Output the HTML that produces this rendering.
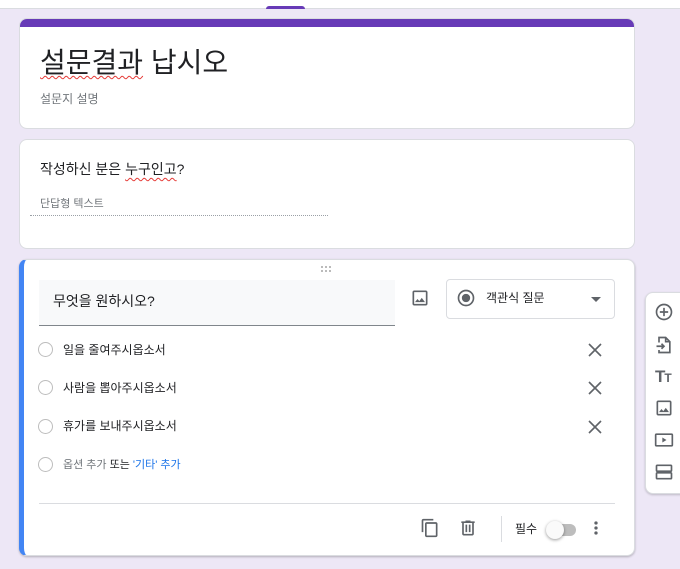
<!DOCTYPE html>
<html><head><meta charset="utf-8"><style>
*{margin:0;padding:0;box-sizing:border-box}
body{width:680px;height:569px;background:#ede7f6;font-family:"Liberation Sans","Noto Sans CJK KR",sans-serif;position:relative;overflow:hidden;color:#202124}
.abs{position:absolute}
.card{position:absolute;background:#fff;border:1px solid #dadce0;border-radius:8px;left:19px;width:616px}
.sq{text-decoration:underline wavy #e53935;text-decoration-thickness:1px;text-underline-offset:3px}
svg{position:absolute}
</style></head><body>
<div class="abs" style="left:0;top:0;width:680px;height:9px;background:#fff;border-bottom:1px solid #dadce0"></div>
<div class="abs" style="left:266px;top:6px;width:39px;height:3px;background:#673ab7;border-radius:3px 3px 0 0"></div>

<div class="card" style="top:18px;height:111px;overflow:hidden">
  <div class="abs" style="left:0;top:0;width:616px;height:8px;background:#673ab7"></div>
  <div class="abs" style="left:20px;top:22px;font-size:28px;color:#202124"><span class="sq">설문결과</span> 납시오</div>
  <div class="abs" style="left:20px;top:71px;font-size:12px;color:#70757a">설문지 설명</div>
</div>

<div class="card" style="top:139px;height:110px">
  <div class="abs" style="left:20px;top:19px;font-size:14px">작성하신 분은 <span class="sq">누구인고</span>?</div>
  <div class="abs" style="left:20px;top:55px;font-size:11px;color:#70757a">단답형 텍스트</div>
  <div class="abs" style="left:10px;top:75px;width:298px;border-bottom:1px dotted #9aa0a6"></div>
</div>

<div class="card" style="top:259px;height:297px;border-left:5px solid #4285f4;box-shadow:0 1px 2px rgba(0,0,0,.25)">
  <svg style="left:297px;top:6px" width="12" height="8" viewBox="0 0 12 8"><g fill="#bbb"><rect x="0" y="0" width="2" height="2"/><rect x="4" y="0" width="2" height="2"/><rect x="8" y="0" width="2" height="2"/><rect x="0" y="4" width="2" height="2"/><rect x="4" y="4" width="2" height="2"/><rect x="8" y="4" width="2" height="2"/></g></svg>
  <div class="abs" style="left:15px;top:20px;width:356px;height:46px;background:#f8f9fa;border-bottom:1px solid #80868b"></div>
  <div class="abs" style="left:29px;top:31px;font-size:14px">무엇을 원하시오?</div>
  <svg style="left:386px;top:28px" width="20" height="20" viewBox="0 0 24 24"><path fill="#5f6368" d="M19 5v14H5V5h14m0-2H5c-1.1 0-2 .9-2 2v14c0 1.1.9 2 2 2h14c1.1 0 2-.9 2-2V5c0-1.1-.9-2-2-2zm-4.86 8.86l-3 3.87L9 13.14 6 17h12l-3.86-5.14z"/></svg>
  <div class="abs" style="left:422px;top:19px;width:169px;height:40px;border:1px solid #dadce0;border-radius:4px"></div>
  <svg style="left:432px;top:28px" width="20" height="20" viewBox="0 0 24 24"><circle cx="12" cy="12" r="9" fill="none" stroke="#5f6368" stroke-width="2"/><circle cx="12" cy="12" r="5" fill="#5f6368"/></svg>
  <div class="abs" style="left:462px;top:29px;font-size:12px">객관식 질문</div>
  <div class="abs" style="left:567px;top:37px;width:0;height:0;border-left:5px solid transparent;border-right:5px solid transparent;border-top:5px solid #5f6368"></div>

  <div class="abs" style="left:14px;top:82px;width:15px;height:15px;border:1.5px solid #bdbdbd;border-radius:50%"></div>
  <div class="abs" style="left:39px;top:81px;font-size:12px">일을 줄여주시옵소서</div>
  <div class="abs" style="left:14px;top:120px;width:15px;height:15px;border:1.5px solid #bdbdbd;border-radius:50%"></div>
  <div class="abs" style="left:39px;top:119px;font-size:12px">사람을 뽑아주시옵소서</div>
  <div class="abs" style="left:14px;top:159px;width:15px;height:15px;border:1.5px solid #bdbdbd;border-radius:50%"></div>
  <div class="abs" style="left:39px;top:157px;font-size:12px">휴가를 보내주시옵소서</div>
  <div class="abs" style="left:14px;top:197px;width:15px;height:15px;border:1.5px solid #bdbdbd;border-radius:50%"></div>
  <div class="abs" style="left:39px;top:196px;font-size:11px;color:#70757a">옵션 추가 <span style="color:#202124">또는</span> <span style="color:#1a73e8">'기타' 추가</span></div>
  <svg style="left:563px;top:82px" width="16" height="16" viewBox="0 0 16 16"><path d="M2 2L14 14M14 2L2 14" stroke="#5f6368" stroke-width="1.6"/></svg>
  <svg style="left:563px;top:120px" width="16" height="16" viewBox="0 0 16 16"><path d="M2 2L14 14M14 2L2 14" stroke="#5f6368" stroke-width="1.6"/></svg>
  <svg style="left:563px;top:159px" width="16" height="16" viewBox="0 0 16 16"><path d="M2 2L14 14M14 2L2 14" stroke="#5f6368" stroke-width="1.6"/></svg>

  <div class="abs" style="left:15px;top:243px;width:576px;border-top:1px solid #dadce0"></div>
  <svg style="left:396px;top:258px" width="20" height="20" viewBox="0 0 24 24"><path fill="#5f6368" d="M16 1H4c-1.1 0-2 .9-2 2v14h2V3h12V1zm3 4H8c-1.1 0-2 .9-2 2v14c0 1.1.9 2 2 2h11c1.1 0 2-.9 2-2V7c0-1.1-.9-2-2-2zm0 16H8V7h11v14z"/></svg>
  <svg style="left:434px;top:258px" width="20" height="20" viewBox="0 0 24 24"><path fill="#5f6368" d="M15 4V3H9v1H4v2h1v13c0 1.1.9 2 2 2h10c1.1 0 2-.9 2-2V6h1V4h-5zm2 15H7V6h10v13zM9 8h2v9H9zm4 0h2v9h-2z"/></svg>
  <div class="abs" style="left:477px;top:256px;height:26px;border-left:1px solid #dadce0"></div>
  <div class="abs" style="left:491px;top:260px;font-size:12px">필수</div>
  <div class="abs" style="left:525px;top:264px;width:27px;height:12px;background:#bdbdbd;border-radius:6px"></div>
  <div class="abs" style="left:522px;top:261px;width:18px;height:18px;background:#fafafa;border-radius:50%;box-shadow:0 1px 3px rgba(0,0,0,.4)"></div>
  <svg style="left:562px;top:258px" width="20" height="20" viewBox="0 0 24 24"><path fill="#5f6368" d="M12 8a2 2 0 100-4 2 2 0 000 4zm0 2a2 2 0 100 4 2 2 0 000-4zm0 6a2 2 0 100 4 2 2 0 000-4z"/></svg>
</div>

<div class="abs" style="left:645px;top:292px;width:45px;height:202px;background:#fff;border:1px solid #dadce0;border-radius:8px;box-shadow:0 1px 2px rgba(0,0,0,.2)"></div>
<svg style="left:654px;top:302px" width="20" height="20" viewBox="0 0 24 24"><path fill="#5f6368" d="M13 7h-2v4H7v2h4v4h2v-4h4v-2h-4V7zm-1-5C6.48 2 2 6.48 2 12s4.48 10 10 10 10-4.48 10-10S17.52 2 12 2zm0 18c-4.41 0-8-3.59-8-8s3.59-8 8-8 8 3.59 8 8-3.59 8-8 8z"/></svg>
<svg style="left:654px;top:335px" width="20" height="20" viewBox="0 0 24 24"><path fill="none" stroke="#5f6368" stroke-width="2" d="M6 9V3h8l5 5v13H6v-3M14 3v5h5M3 13.5h9M9 10.5l3 3-3 3"/></svg>
<div class="abs" style="left:655px;top:367px;font-size:17px;font-weight:bold;color:#5f6368;letter-spacing:-1px">T<span style="font-size:12px">T</span></div>
<svg style="left:654px;top:398px" width="20" height="20" viewBox="0 0 24 24"><path fill="#5f6368" d="M19 5v14H5V5h14m0-2H5c-1.1 0-2 .9-2 2v14c0 1.1.9 2 2 2h14c1.1 0 2-.9 2-2V5c0-1.1-.9-2-2-2zm-4.86 8.86l-3 3.87L9 13.14 6 17h12l-3.86-5.14z"/></svg>
<svg style="left:654px;top:430px" width="20" height="20" viewBox="0 0 24 24"><rect x="2" y="5" width="20" height="14" rx="1" fill="none" stroke="#5f6368" stroke-width="2"/><path d="M10 9v6l5-3z" fill="#5f6368"/></svg>
<svg style="left:654px;top:462px" width="20" height="20" viewBox="0 0 24 24"><rect x="3" y="4" width="18" height="7" rx="1" fill="none" stroke="#5f6368" stroke-width="2"/><rect x="3" y="13" width="18" height="7" rx="1" fill="none" stroke="#5f6368" stroke-width="2"/></svg>
</body></html>
